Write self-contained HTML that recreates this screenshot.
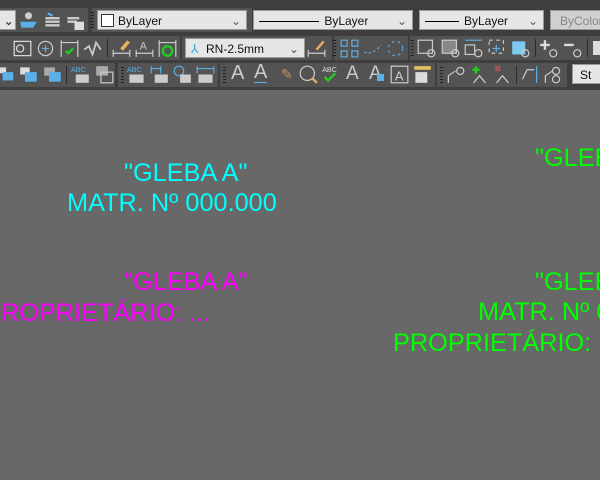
<!DOCTYPE html>
<html><head><style>
body{margin:0;width:600px;height:480px;overflow:hidden;background:#686868;font-family:"Liberation Sans",sans-serif;position:relative}
.tb{position:absolute;left:0;width:600px;background:#444}
.r{position:absolute;height:24px;background:#535353}
.cb{position:absolute;background:#e6e6e6;border:1px solid #999;font-size:12px;color:#111;height:20px;line-height:20px;box-sizing:border-box}
.ic{position:absolute;width:19px;height:19px;margin:-1px 0 0 -1px}
.sep{position:absolute;width:1px;height:18px;background:#2c2c2c}
.grip{position:absolute;width:3px;height:16px;background:repeating-linear-gradient(#222 0 1px,transparent 1px 3px)}
</style></head><body>
<div class="tb" style="top:0;height:90px;background:#3e3e3e"></div>
<!-- row 1 -->
<div class="r" style="left:0;top:8px;width:88px"></div>
<div class="cb" style="left:-4px;top:10px;width:20px">&nbsp;&nbsp;⌄</div>
<svg class="ic" style="left:20px;top:12px" viewBox="0 0 16 16"><circle cx="8" cy="4" r="3" fill="#ccc"/><path d="M1 9h14l-3 5H2z" fill="#5bb0e8"/></svg>
<svg class="ic" style="left:44px;top:12px" viewBox="0 0 16 16"><path d="M2 6h12M2 9h12M2 12h12" stroke="#ccc" stroke-width="2"/><path d="M4 2l4 2" stroke="#5bb0e8" stroke-width="2"/></svg>
<svg class="ic" style="left:66px;top:12px" viewBox="0 0 16 16"><path d="M2 6h10M2 9h8" stroke="#ccc" stroke-width="2"/><rect x="8" y="9" width="8" height="7" fill="#ddd"/></svg>
<div class="r" style="left:92px;top:8px;width:160px"></div>
<div class="grip" style="left:91px;top:12px"></div>
<div class="cb" style="left:97px;top:10px;width:150px;padding-left:20px">ByLayer<span style="position:absolute;right:5px;color:#555">⌄</span><span style="position:absolute;left:3px;top:3px;width:11px;height:11px;background:#fff;border:1px solid #333"></span></div>
<div class="cb" style="left:253px;top:10px;width:160px;text-align:center">&nbsp;&nbsp;&nbsp;&nbsp;&nbsp;&nbsp;&nbsp;&nbsp;ByLayer<span style="position:absolute;left:5px;top:10px;width:60px;height:1px;background:#000"></span><span style="position:absolute;right:5px;color:#555">⌄</span></div>
<div class="cb" style="left:419px;top:10px;width:125px;padding-left:44px">ByLayer<span style="position:absolute;left:5px;top:10px;width:34px;height:1px;background:#000"></span><span style="position:absolute;right:5px;color:#555">⌄</span></div>
<div class="cb" style="left:550px;top:10px;width:60px;padding-left:9px;background:#d0d0d0;color:#888">ByColor</div>
<!-- row 2 -->
<div class="r" style="left:0;top:36px;width:180px"></div>
<svg class="ic" style="left:14px;top:40px" viewBox="0 0 16 16"><rect x="1" y="2" width="14" height="12" fill="none" stroke="#ddd"/><circle cx="6" cy="8" r="3" fill="none" stroke="#ddd"/></svg>
<svg class="ic" style="left:37px;top:40px" viewBox="0 0 16 16"><circle cx="8" cy="8" r="6" fill="none" stroke="#ccc"/><path d="M8 5v6M5 8h6" stroke="#5bb0e8"/></svg>
<svg class="ic" style="left:61px;top:40px" viewBox="0 0 16 16"><path d="M1 1v14M15 1v14M1 3h14" stroke="#ccc"/><path d="M5 10l2 2 4-4" stroke="#2c2" stroke-width="2" fill="none"/></svg>
<svg class="ic" style="left:84px;top:40px" viewBox="0 0 16 16"><path d="M1 9l4-3 3 7 3-10 4 6" stroke="#ccc" fill="none" stroke-width="1.5"/></svg>
<div class="sep" style="left:107px;top:39px"></div>
<svg class="ic" style="left:113px;top:40px" viewBox="0 0 16 16"><path d="M1 9v6M15 9v6M1 12h14" stroke="#ccc"/><path d="M8 9l6-7" stroke="#e8b060" stroke-width="3"/></svg>
<svg class="ic" style="left:136px;top:40px" viewBox="0 0 16 16"><path d="M1 9v6M15 9v6M1 12h14" stroke="#ccc"/><text x="4" y="9" font-size="9" fill="#ccc">A</text></svg>
<svg class="ic" style="left:159px;top:40px" viewBox="0 0 16 16"><path d="M1 1v14M15 1v14M1 3h14" stroke="#ccc"/><circle cx="8" cy="10" r="4" fill="none" stroke="#2c2" stroke-width="2"/></svg>
<div class="r" style="left:182px;top:36px;width:150px"></div>
<div class="cb" style="left:185px;top:38px;width:120px;padding-left:20px;font-size:12px">RN-2.5mm<span style="position:absolute;left:5px;color:#29a8e0">⅄</span><span style="position:absolute;right:5px;color:#555">⌄</span></div>
<svg class="ic" style="left:308px;top:40px" viewBox="0 0 16 16"><path d="M1 9v6M15 9v6M1 12h14" stroke="#ccc"/><path d="M8 9l6-7" stroke="#e8b060" stroke-width="2"/></svg>
<div class="r" style="left:334px;top:36px;width:74px"></div>
<div class="grip" style="left:333px;top:40px"></div>
<svg class="ic" style="left:341px;top:40px" viewBox="0 0 16 16"><path d="M1 1h5v5H1zM10 1h5v5h-5zM1 10h5v5H1zM10 10h5v5h-5z" fill="none" stroke="#5bb0e8"/></svg>
<svg class="ic" style="left:364px;top:40px" viewBox="0 0 16 16"><path d="M1 11q7 3 14-6" stroke="#5bb0e8" fill="none" stroke-dasharray="2 2"/></svg>
<svg class="ic" style="left:387px;top:40px" viewBox="0 0 16 16"><circle cx="8" cy="8" r="6" fill="none" stroke="#5bb0e8" stroke-dasharray="2 3"/></svg>
<div class="r" style="left:410px;top:36px;width:190px"></div>
<div class="grip" style="left:411px;top:40px"></div>
<svg class="ic" style="left:418px;top:40px" viewBox="0 0 16 16"><rect x="1" y="1" width="12" height="11" fill="none" stroke="#ccc"/><circle cx="12" cy="12" r="3" fill="none" stroke="#ccc"/></svg>
<svg class="ic" style="left:442px;top:40px" viewBox="0 0 16 16"><rect x="1" y="1" width="12" height="11" fill="#888" stroke="#ccc"/><circle cx="12" cy="12" r="3" fill="none" stroke="#ccc"/></svg>
<svg class="ic" style="left:465px;top:40px" viewBox="0 0 16 16"><path d="M1 1h14" stroke="#5bb0e8"/><rect x="1" y="5" width="8" height="8" fill="none" stroke="#ccc"/><circle cx="12" cy="12" r="3" fill="none" stroke="#ccc"/></svg>
<svg class="ic" style="left:489px;top:40px" viewBox="0 0 16 16"><path d="M7 5v6M4 8h6" stroke="#5bb0e8"/><rect x="1" y="1" width="12" height="11" fill="none" stroke="#ccc" stroke-dasharray="3 3"/></svg>
<svg class="ic" style="left:512px;top:40px" viewBox="0 0 16 16"><rect x="1" y="2" width="11" height="11" fill="#7fc8f0"/><circle cx="12" cy="12" r="3" fill="none" stroke="#ccc"/></svg>
<div class="sep" style="left:535px;top:39px"></div>
<svg class="ic" style="left:540px;top:40px" viewBox="0 0 16 16"><path d="M5 1v8M1 5h8" stroke="#ddd" stroke-width="2"/><circle cx="12" cy="12" r="3" fill="none" stroke="#ccc"/></svg>
<svg class="ic" style="left:564px;top:40px" viewBox="0 0 16 16"><path d="M1 5h8" stroke="#ddd" stroke-width="2"/><circle cx="12" cy="12" r="3" fill="none" stroke="#ccc"/></svg>
<div class="sep" style="left:587px;top:39px"></div>
<div style="position:absolute;left:593px;top:41px;width:10px;height:14px;background:#ddd"></div>
<!-- row 3 -->
<div class="r" style="left:0;top:63px;width:115px"></div>
<svg class="ic" style="left:0;top:66px" viewBox="0 0 16 16"><rect x="0" y="2" width="6" height="5" fill="#ddd"/><rect x="3" y="6" width="9" height="7" fill="#5bb0e8"/></svg>
<svg class="ic" style="left:20px;top:66px" viewBox="0 0 16 16"><rect x="1" y="2" width="8" height="6" fill="#ddd"/><rect x="5" y="6" width="10" height="8" fill="#5bb0e8"/></svg>
<svg class="ic" style="left:44px;top:66px" viewBox="0 0 16 16"><rect x="1" y="2" width="9" height="7" fill="#aaa"/><rect x="5" y="6" width="10" height="8" fill="#5bb0e8"/></svg>
<div class="sep" style="left:66px;top:66px"></div>
<svg class="ic" style="left:72px;top:66px" viewBox="0 0 16 16"><text x="0" y="6" font-size="6" fill="#5bb0e8">ABC</text><rect x="4" y="8" width="11" height="7" fill="#ccc"/></svg>
<svg class="ic" style="left:96px;top:66px" viewBox="0 0 16 16"><rect x="1" y="1" width="10" height="8" fill="#aaa"/><rect x="5" y="6" width="10" height="9" fill="none" stroke="#ccc"/></svg>
<div class="r" style="left:118px;top:63px;width:100px"></div>
<div class="grip" style="left:121px;top:67px"></div>
<svg class="ic" style="left:128px;top:66px" viewBox="0 0 16 16"><text x="0" y="6" font-size="6" fill="#5bb0e8">ABC</text><rect x="2" y="8" width="12" height="7" fill="#ccc"/></svg>
<svg class="ic" style="left:151px;top:66px" viewBox="0 0 16 16"><path d="M1 1v6M9 1v6M1 3h8" stroke="#5bb0e8"/><rect x="4" y="8" width="11" height="7" fill="#ccc"/></svg>
<svg class="ic" style="left:174px;top:66px" viewBox="0 0 16 16"><circle cx="5" cy="5" r="4" fill="none" stroke="#5bb0e8"/><rect x="6" y="8" width="9" height="7" fill="#ccc"/></svg>
<svg class="ic" style="left:197px;top:66px" viewBox="0 0 16 16"><path d="M1 1v6M15 1v6M1 3h14" stroke="#5bb0e8"/><rect x="2" y="8" width="12" height="7" fill="#ccc"/></svg>
<div class="r" style="left:220px;top:63px;width:215px"></div>
<div class="grip" style="left:223px;top:67px"></div>
<div style="position:absolute;left:231px;top:62px;font-size:20px;color:#ccc">A</div>
<div style="position:absolute;left:254px;top:62px;font-size:20px;color:#ccc;border-bottom:1px solid #5bb0e8;line-height:20px">A</div>
<div style="position:absolute;left:281px;top:66px;font-size:14px;color:#c89060">✎</div>
<svg class="ic" style="left:300px;top:66px" viewBox="0 0 16 16"><circle cx="7" cy="7" r="6" fill="none" stroke="#ccc"/><path d="M11 11l4 4" stroke="#e8b060" stroke-width="2"/></svg>
<svg class="ic" style="left:322px;top:66px" viewBox="0 0 16 16"><text x="1" y="6" font-size="6" fill="#ddd">ABC</text><path d="M3 10l3 3 6-6" stroke="#2c2" stroke-width="2" fill="none"/></svg>
<div style="position:absolute;left:346px;top:63px;font-size:19px;color:#ccc">A</div>
<div style="position:absolute;left:369px;top:63px;font-size:19px;color:#ccc">A<span style="position:absolute;left:8px;top:11px;width:7px;height:7px;background:#5bb0e8"></span></div>
<svg class="ic" style="left:391px;top:66px" viewBox="0 0 16 16"><rect x="1" y="1" width="14" height="14" fill="none" stroke="#ccc"/><text x="4" y="13" font-size="11" fill="#ccc">A</text></svg>
<svg class="ic" style="left:414px;top:66px" viewBox="0 0 16 16"><rect x="1" y="1" width="14" height="3" fill="#e8c060"/><rect x="2" y="6" width="10" height="9" fill="#ddd"/></svg>
<div class="r" style="left:437px;top:63px;width:130px"></div>
<div class="grip" style="left:440px;top:67px"></div>
<svg class="ic" style="left:447px;top:66px" viewBox="0 0 16 16"><path d="M2 15V9l6-4" stroke="#ccc" fill="none"/><circle cx="12" cy="5" r="3" fill="none" stroke="#ccc"/></svg>
<svg class="ic" style="left:471px;top:66px" viewBox="0 0 16 16"><path d="M2 4h6M5 1v6" stroke="#2c2" stroke-width="2"/><path d="M3 15l5-6 5 6" stroke="#ccc" fill="none"/></svg>
<svg class="ic" style="left:494px;top:66px" viewBox="0 0 16 16"><path d="M2 1l4 4M6 1L2 5" stroke="#a55" stroke-width="2"/><path d="M3 15l5-6 5 6" stroke="#ccc" fill="none"/></svg>
<div class="sep" style="left:516px;top:66px"></div>
<svg class="ic" style="left:521px;top:66px" viewBox="0 0 16 16"><path d="M2 12l4-8 6 0" stroke="#ccc" fill="none"/><path d="M14 1v14" stroke="#5bb0e8"/></svg>
<svg class="ic" style="left:544px;top:66px" viewBox="0 0 16 16"><path d="M2 15V9l6-4" stroke="#ccc" fill="none"/><circle cx="11" cy="5" r="3" fill="none" stroke="#ccc"/><circle cx="11" cy="12" r="3" fill="none" stroke="#ccc"/></svg>
<div class="cb" style="left:572px;top:64px;width:40px;padding-left:7px">St</div>
<!-- canvas text -->
<svg style="position:absolute;left:0;top:0" width="600" height="480" font-family="Liberation Sans, sans-serif" font-size="25.3">
<text x="124" y="181" fill="#00ffff">"GLEBA A"</text>
<text x="67" y="211" fill="#00ffff">MATR. Nº 000.000</text>
<text x="124" y="290" fill="#ff00ff">"GLEBA A"</text>
<text x="-16" y="321" fill="#ff00ff">PROPRIETÁRIO: ...</text>
<text x="535" y="166" fill="#00ff00">"GLEBA A"</text>
<text x="535" y="290" fill="#00ff00">"GLEBA A"</text>
<text x="478" y="320" fill="#00ff00">MATR. Nº 000.000</text>
<text x="393" y="351" fill="#00ff00">PROPRIETÁRIO: ...</text>
</svg>
</body></html>
